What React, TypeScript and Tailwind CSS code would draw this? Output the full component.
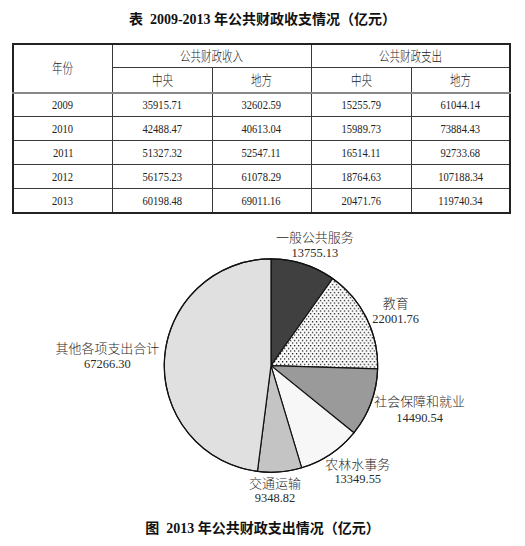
import React from "react";

const FONT = "'Liberation Serif', 'Noto Sans CJK SC', serif";
const CJK = "'Noto Sans CJK SC', 'Liberation Sans', sans-serif";

const rows = [
  ["2009", "35915.71", "32602.59", "15255.79", "61044.14"],
  ["2010", "42488.47", "40613.04", "15989.73", "73884.43"],
  ["2011", "51327.32", "52547.11", "16514.11", "92733.68"],
  ["2012", "56175.23", "61078.29", "18764.63", "107188.34"],
  ["2013", "60198.48", "69011.16", "20471.76", "119740.34"],
];

const slices = [
  { v: 13755.13, fill: "#404040" },
  { v: 22001.76, fill: "url(#dots)" },
  { v: 14490.54, fill: "#9a9a9a" },
  { v: 13349.55, fill: "#f7f7f7" },
  { v: 9348.82, fill: "#c4c4c4" },
  { v: 67266.3, fill: "#e0e0e0" },
];

const CX = 271;
const CY = 365;
const R = 107;

function pt(deg: number) {
  const a = (deg * Math.PI) / 180;
  return [CX + R * Math.sin(a), CY - R * Math.cos(a)];
}

function Cell({
  children,
  className = "",
  rowSpan,
  colSpan,
  cjk = false,
}: {
  children: React.ReactNode;
  className?: string;
  rowSpan?: number;
  colSpan?: number;
  cjk?: boolean;
}) {
  return (
    <td
      rowSpan={rowSpan}
      colSpan={colSpan}
      className={"border border-[#3a3a3a] text-center p-0 text-[13.5px] text-[#222] " + className}
    >
      <span
        className={"inline-block scale-x-[0.78] whitespace-nowrap " + (cjk ? "font-light" : "")}
        style={cjk ? { fontFamily: CJK } : undefined}
      >
        {children}
      </span>
    </td>
  );
}

export default function App() {
  const total = slices.reduce((s, x) => s + x.v, 0);
  let acc = 0;
  const paths = slices.map((s, i) => {
    const a0 = (acc / total) * 360;
    acc += s.v;
    const a1 = (acc / total) * 360;
    const [x0, y0] = pt(a0);
    const [x1, y1] = pt(a1);
    const large = a1 - a0 > 180 ? 1 : 0;
    const d = `M ${CX} ${CY} L ${x0} ${y0} A ${R} ${R} 0 ${large} 1 ${x1} ${y1} Z`;
    return <path key={i} d={d} fill={s.fill} stroke="#111" strokeWidth={1.2} strokeLinejoin="round" />;
  });

  const labels: [string, string, number, number, number][] = [
    ["一般公共服务", "13755.13", 315, 236, 252],
    ["教育", "22001.76", 396, 302, 318],
    ["社会保障和就业", "14490.54", 420, 400, 418],
    ["农林水事务", "13349.55", 358, 463, 479],
    ["交通运输", "9348.82", 275, 482, 498],
    ["其他各项支出合计", "67266.30", 107, 347, 363],
  ];

  return (
    <div className="w-[525px] h-[546px] bg-white flex flex-col" style={{ fontFamily: FONT }}>
      <div className="h-[43px] flex items-center justify-center pb-[4px] text-[14px] font-bold text-[#111] whitespace-pre">
        表  2009-2013 年公共财政收支情况（亿元）
      </div>
      <div className="pl-[12px]">
        <table className="w-[497px] border-collapse border-2 border-[#222] table-fixed">
          <colgroup>
            <col className="w-[99px]" />
            <col className="w-[100px]" />
            <col className="w-[99px]" />
            <col className="w-[100px]" />
            <col className="w-[99px]" />
          </colgroup>
          <tbody>
            <tr className="h-[24px]">
              <Cell rowSpan={2} cjk className="border-b-2 border-b-[#888]">
                年份
              </Cell>
              <Cell colSpan={2} cjk>
                公共财政收入
              </Cell>
              <Cell colSpan={2} cjk>
                公共财政支出
              </Cell>
            </tr>
            <tr className="h-[25px]">
              {["中央", "地方", "中央", "地方"].map((t, i) => (
                <Cell key={i} cjk className="border-b-2 border-b-[#888]">
                  {t}
                </Cell>
              ))}
            </tr>
            {rows.map((r) => (
              <tr key={r[0]} className="h-[24px]">
                {r.map((c, i) => (
                  <Cell key={i}>{c}</Cell>
                ))}
              </tr>
            ))}
          </tbody>
        </table>
      </div>
      <svg width="525" height="297" viewBox="0 213 525 297" className="block">
        <defs>
          <pattern id="dots" width="4" height="5.34" patternUnits="userSpaceOnUse">
            <rect width="4" height="5.34" fill="#ffffff" />
            <rect x="0" y="0" width="1.3" height="1.3" fill="#111" />
            <rect x="2" y="2.67" width="1.3" height="1.3" fill="#111" />
          </pattern>
        </defs>
        {paths}
        <circle cx={CX} cy={CY} r={R} fill="none" stroke="#111" strokeWidth={1.2} />
        {labels.map(([a, b, x, y1, y2]) => (
          <g key={a} fill="#2a2a2a">
            <text
              x={x}
              y={y1}
              textAnchor="middle"
              dominantBaseline="central"
              fontSize="13"
              fontWeight={300}
              style={{ fontFamily: CJK }}
            >
              {a}
            </text>
            <text x={x} y={y2} textAnchor="middle" dominantBaseline="central" fontSize="12.5" style={{ fontFamily: FONT }}>
              {b}
            </text>
          </g>
        ))}
      </svg>
      <div className="h-[36px] flex items-center justify-center text-[14px] font-bold text-[#111] whitespace-pre">
        图  2013 年公共财政支出情况（亿元）
      </div>
    </div>
  );
}
